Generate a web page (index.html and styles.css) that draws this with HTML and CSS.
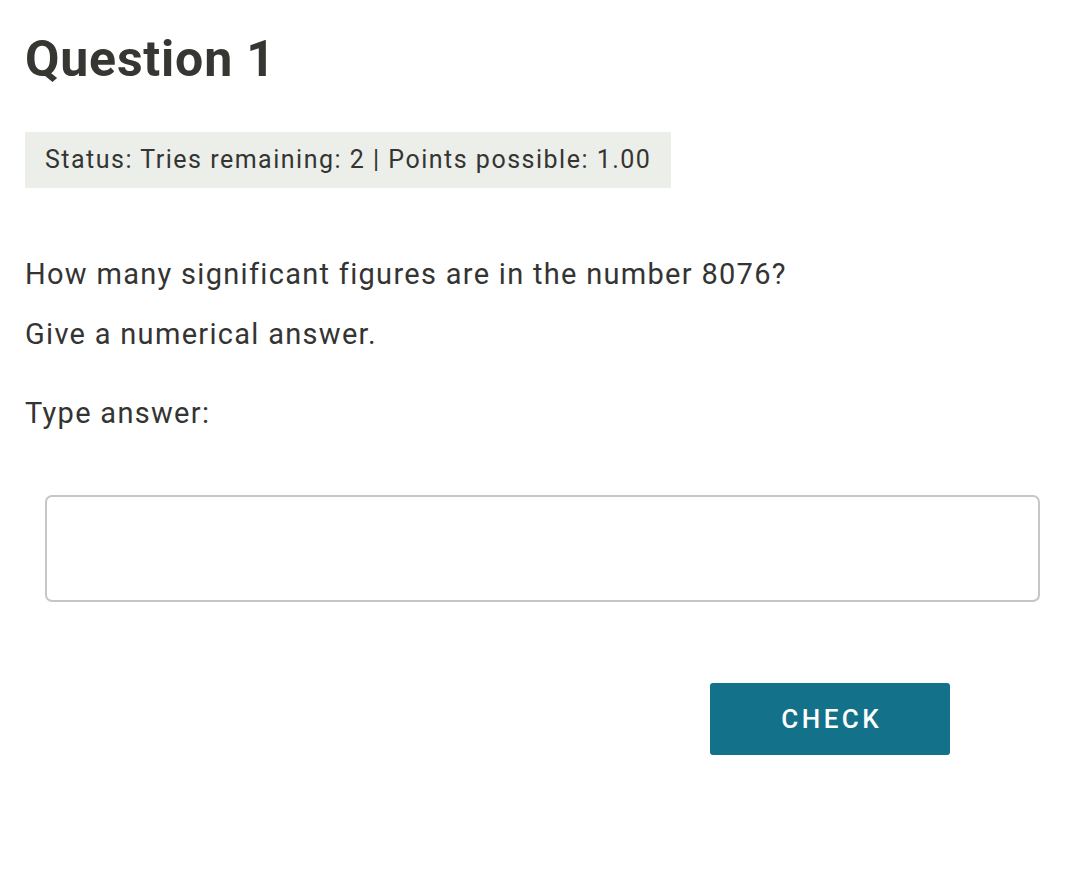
FILE: index.html
```html
<!DOCTYPE html>
<html lang="en">
<head>
   <meta charset="utf-8">
   <meta name="viewport" content="width=device-width, initial-scale=1">
   <title>Question 1</title>
   <link rel="stylesheet" href="styles.css">
</head>
<body>
    <div id="problem">
        <h2 class="problem_title">Question 1</h2>
        <div class="status">Status: Tries remaining: 2 | Points possible: 1.00</div>
        <p class="prompt">How many significant figures are in the number 8076?</p>
        <p class="prompt">Give a numerical answer.</p>
        <label class="answer_label" for="answer">Type answer:</label>
        <input id="answer" type="text">
        <div class="actions">
            <button id="check">Check</button>
        </div>
    </div>
</body>
</html>
```

FILE: styles.css
```css
body {
    margin: 0;
    background-color: #ffffff;
    font-family: Roboto, "Liberation Sans", sans-serif;
    color: #343432;
}

#problem {
    padding: 0 25px;
}

.problem_title {
    margin: 0;
    padding-top: 27px;
    font-size: 50px;
    font-weight: 700;
    line-height: 64px;
    letter-spacing: 0.8px;
    color: #363633;
}

.status {
    display: inline-block;
    margin-top: 41px;
    padding: 0 20px;
    height: 56px;
    line-height: 56px;
    font-size: 25px;
    letter-spacing: 1.5px;
    background-color: #eceee9;
}

.prompt {
    margin: 0;
    font-size: 29px;
    line-height: 60px;
    letter-spacing: 1.3px;
}

.prompt:first-of-type {
    margin-top: 56px;
}

.answer_label {
    display: block;
    margin-top: 29px;
    font-size: 29px;
    line-height: 40px;
    letter-spacing: 1.3px;
}

#answer {
    display: block;
    box-sizing: border-box;
    margin: 62px 25px 0 20px;
    width: calc(100% - 45px);
    height: 107px;
    border: 2px solid #c6c6c6;
    border-radius: 7px;
    font-size: 26px;
    padding: 0 16px;
}

.actions {
    display: flex;
    justify-content: flex-end;
    padding-right: 115px;
    margin-top: 81px;
}

button {
    background-color: #137189;
    border: none;
    border-radius: 3px;
    color: #ffffff;
    font-family: Roboto, "Liberation Sans", sans-serif;
    font-size: 26px;
    font-weight: 500;
    letter-spacing: 3.5px;
    text-indent: 3.5px;
    text-transform: uppercase;
    width: 240px;
    height: 72px;
    cursor: pointer;
}
```
